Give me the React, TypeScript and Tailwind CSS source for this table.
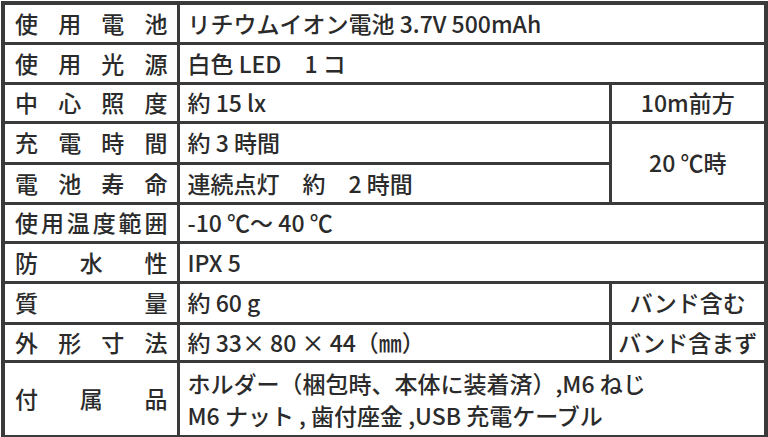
const font = { fontFamily: '"Noto Sans CJK JP", "Noto Sans", sans-serif' };

const Label = ({ chars }: { chars: string[] }) => (
  <div className="flex justify-between pl-[10px] pr-[9px]">
    {chars.map((c, i) => (
      <span key={i}>{c}</span>
    ))}
  </div>
);

const cell = "border-[3px] border-[#3a3a3a] align-middle p-0";

export default function App() {
  return (
    <div className="w-[768px] h-[437px] bg-white pl-[1px] pt-[1px]" style={font}>
      <table className="w-[767px] border-collapse border-[4px] border-[#3a3a3a] text-[23px] leading-none font-medium text-[#2b2b2b] table-fixed">
        <colgroup>
          <col className="w-[175px]" />
          <col className="w-[432px]" />
          <col />
        </colgroup>
        <tbody>
          <tr className="h-[40px]">
            <td className={cell}><Label chars={["使", "用", "電", "池"]} /></td>
            <td className={`${cell} pl-[8px]`} colSpan={2}>リチウムイオン電池 3.7V 500mAh</td>
          </tr>
          <tr className="h-[40px]">
            <td className={cell}><Label chars={["使", "用", "光", "源"]} /></td>
            <td className={`${cell} pl-[8px]`} colSpan={2}>白色 LED　1 コ</td>
          </tr>
          <tr className="h-[39px]">
            <td className={cell}><Label chars={["中", "心", "照", "度"]} /></td>
            <td className={`${cell} pl-[8px]`}>約 15 lx</td>
            <td className={`${cell} text-center`}>10m前方</td>
          </tr>
          <tr className="h-[41px]">
            <td className={cell}><Label chars={["充", "電", "時", "間"]} /></td>
            <td className={`${cell} pl-[8px]`}>約 3 時間</td>
            <td className={`${cell} text-center`} rowSpan={2}>20 ℃時</td>
          </tr>
          <tr className="h-[40px]">
            <td className={cell}><Label chars={["電", "池", "寿", "命"]} /></td>
            <td className={`${cell} pl-[8px]`}>連続点灯　約　2 時間</td>
          </tr>
          <tr className="h-[39px]">
            <td className={cell}><Label chars={["使", "用", "温", "度", "範", "囲"]} /></td>
            <td className={`${cell} pl-[8px]`} colSpan={2}>-10 ℃～ 40 ℃</td>
          </tr>
          <tr className="h-[40px]">
            <td className={cell}><Label chars={["防", "水", "性"]} /></td>
            <td className={`${cell} pl-[8px]`} colSpan={2}>IPX 5</td>
          </tr>
          <tr className="h-[41px]">
            <td className={cell}><Label chars={["質", "量"]} /></td>
            <td className={`${cell} pl-[8px]`}>約 60 g</td>
            <td className={`${cell} text-center`}>バンド含む</td>
          </tr>
          <tr className="h-[38px]">
            <td className={cell}><Label chars={["外", "形", "寸", "法"]} /></td>
            <td className={`${cell} pl-[8px]`}>約 33× 80 × 44（㎜）</td>
            <td className={`${cell} text-center`}>バンド含まず</td>
          </tr>
          <tr className="h-[76px]">
            <td className={cell}><Label chars={["付", "属", "品"]} /></td>
            <td className={`${cell} pl-[8px] leading-[32px]`} colSpan={2}>
              <div>ホルダー（梱包時、本体に装着済）,M6 ねじ</div>
              <div>M6 ナット , 歯付座金 ,USB 充電ケーブル</div>
            </td>
          </tr>
        </tbody>
      </table>
    </div>
  );
}
